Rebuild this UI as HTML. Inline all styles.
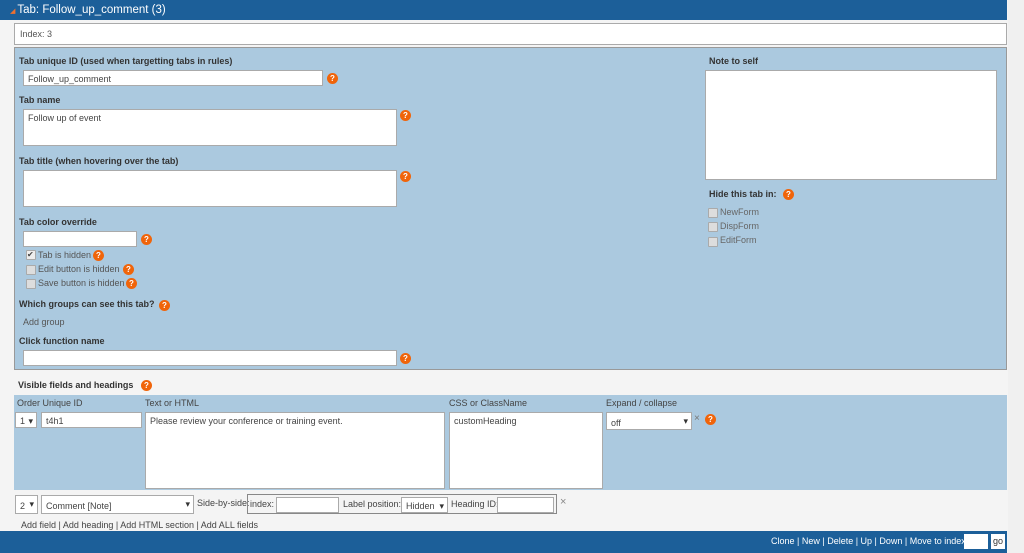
<!DOCTYPE html>
<html><head><style>
body{margin:0;width:1024px;height:553px;background:#f4f4f4;font-family:"Liberation Sans",sans-serif;font-size:9px;color:#444;position:relative;overflow:hidden}
.a{position:absolute}
.hd{left:0;top:0;width:1007px;height:20px;background:#1c5f99;color:#fff;font-size:11.5px;line-height:20px}
.in{background:#fff;border:1px solid #aaa;box-sizing:border-box}
.b{font-weight:bold;color:#333;font-size:9px}
.q{position:absolute;width:11px;height:11px;border-radius:50%;background:#f0640a;color:#fff;font-size:8px;font-weight:bold;text-align:center;line-height:11px}
.cb{position:absolute;width:8px;height:8px;background:#ddd;border:1px solid #aaa;border-radius:1px;font-size:8px;line-height:8px}
.sel:after{content:"▾";position:absolute;right:3px;top:3px;font-size:9px;color:#333}
.sel{position:absolute;background:#fff;border:1px solid #aaa;box-sizing:border-box;padding:3px 4px}
.t{position:absolute;padding:3px 4px;box-sizing:border-box;background:#fff;border:1px solid #aaa}
</style></head><body>
<div class="a hd"><span style="color:#f07030;font-size:7px;margin-left:10px;margin-right:2px">◢</span>Tab: Follow_up_comment (3)</div>
<div class="a" style="left:1008px;top:0;width:16px;height:553px;background:#f0f0f0"></div>
<div class="a in" style="left:14px;top:23px;width:993px;height:22px;padding:5px 5px;color:#555">Index: 3</div>
<div class="a" style="left:14px;top:47px;width:993px;height:323px;background:#abc9df;border:1px solid #999;box-sizing:border-box"></div>

<div class="a b" style="left:19px;top:56px">Tab unique ID (used when targetting tabs in rules)</div>
<div class="t" style="left:23px;top:70px;width:300px;height:16px">Follow_up_comment</div><div class="q" style="left:327px;top:73px">?</div>
<div class="a b" style="left:19px;top:95px">Tab name</div>
<div class="t" style="left:23px;top:109px;width:374px;height:37px">Follow up of event</div><div class="q" style="left:400px;top:110px">?</div>
<div class="a b" style="left:19px;top:156px">Tab title (when hovering over the tab)</div>
<div class="t" style="left:23px;top:170px;width:374px;height:37px"></div><div class="q" style="left:400px;top:171px">?</div>
<div class="a b" style="left:19px;top:217px">Tab color override</div>
<div class="t" style="left:23px;top:231px;width:114px;height:16px"></div><div class="q" style="left:141px;top:234px">?</div>
<div class="cb" style="left:26px;top:250px;background:#eee">✔</div><div class="a" style="left:38px;top:250px;font-size:9px;color:#555">Tab is hidden</div><div class="q" style="left:93px;top:250px">?</div>
<div class="cb" style="left:26px;top:265px"></div><div class="a" style="left:38px;top:264px;color:#555">Edit button is hidden</div><div class="q" style="left:123px;top:264px">?</div>
<div class="cb" style="left:26px;top:279px"></div><div class="a" style="left:38px;top:278px;color:#555">Save button is hidden</div><div class="q" style="left:126px;top:278px">?</div>
<div class="a b" style="left:19px;top:299px">Which groups can see this tab?</div><div class="q" style="left:159px;top:300px">?</div>
<div class="a" style="left:23px;top:317px;color:#555">Add group</div>
<div class="a b" style="left:19px;top:336px">Click function name</div>
<div class="t" style="left:23px;top:350px;width:374px;height:16px"></div><div class="q" style="left:400px;top:353px">?</div>

<div class="a b" style="left:709px;top:56px">Note to self</div>
<div class="t" style="left:705px;top:70px;width:292px;height:110px"></div>
<div class="a b" style="left:709px;top:189px">Hide this tab in:</div><div class="q" style="left:783px;top:189px">?</div>
<div class="cb" style="left:708px;top:208px"></div><div class="a" style="left:720px;top:207px;color:#666">NewForm</div>
<div class="cb" style="left:708px;top:222px"></div><div class="a" style="left:720px;top:221px;color:#666">DispForm</div>
<div class="cb" style="left:708px;top:237px"></div><div class="a" style="left:720px;top:235px;color:#666">EditForm</div>

<div class="a b" style="left:18px;top:380px">Visible fields and headings</div><div class="q" style="left:141px;top:380px">?</div>
<div class="a" style="left:14px;top:395px;width:993px;height:95px;background:#abc9df"></div>
<div class="a" style="left:17px;top:398px">Order Unique ID</div>
<div class="a" style="left:145px;top:398px">Text or HTML</div>
<div class="a" style="left:449px;top:398px">CSS or ClassName</div>
<div class="a" style="left:606px;top:398px">Expand / collapse</div>
<div class="sel" style="left:15px;top:412px;width:22px;height:16px;background:#fff">1</div>
<div class="t" style="left:41px;top:412px;width:101px;height:16px">t4h1</div>
<div class="t" style="left:145px;top:412px;width:300px;height:77px">Please review your conference or training event.</div>
<div class="t" style="left:449px;top:412px;width:154px;height:77px">customHeading</div>
<div class="sel" style="left:606px;top:412px;width:86px;height:18px;padding-top:5px">off</div>
<div class="a" style="left:694px;top:413px;font-size:10px;color:#777">×</div><div class="q" style="left:705px;top:414px">?</div>

<div class="sel" style="left:15px;top:495px;width:23px;height:19px;padding-top:5px">2</div>
<div class="sel" style="left:41px;top:495px;width:153px;height:19px;padding-top:5px">Comment [Note]</div>
<div class="a" style="left:197px;top:498px">Side-by-side:</div>
<div class="a" style="left:247px;top:494px;width:310px;height:20px;border:1px solid #888;box-sizing:border-box"></div>
<div class="a" style="left:250px;top:499px">index:</div>
<div class="t" style="left:276px;top:497px;width:63px;height:16px"></div>
<div class="a" style="left:343px;top:499px">Label position:</div>
<div class="sel" style="left:401px;top:497px;width:47px;height:16px;padding-top:3px">Hidden</div>
<div class="a" style="left:451px;top:499px">Heading ID:</div>
<div class="t" style="left:497px;top:497px;width:57px;height:16px"></div>
<div class="a" style="left:560px;top:496px;font-size:11px;color:#888">×</div>
<div class="a" style="left:21px;top:520px">Add field | Add heading | Add HTML section | Add ALL fields</div>

<div class="a" style="left:0;top:531px;width:1007px;height:22px;background:#1c5f99"></div>
<div class="a" style="left:771px;top:536px;color:#fff;font-size:9px">Clone | New | Delete | Up | Down | Move to index:</div>
<div class="a" style="left:964px;top:534px;width:24px;height:15px;background:#fff"></div>
<div class="a" style="left:991px;top:534px;width:14px;height:15px;background:#fff;color:#333;font-size:9px;text-align:center;line-height:15px">go</div>
</body></html>
